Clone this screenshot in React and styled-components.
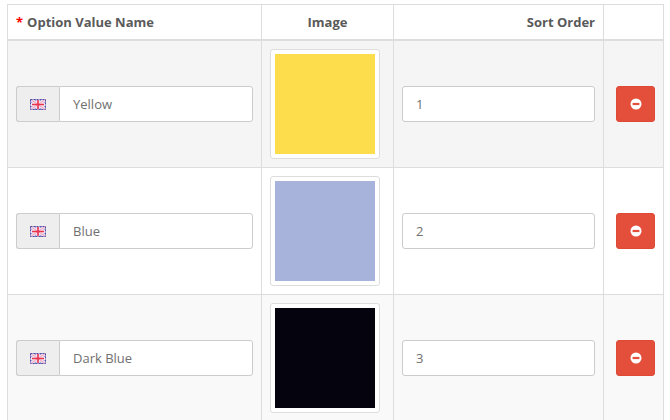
import React from 'react'
import styled, { createGlobalStyle } from 'styled-components'

const GlobalStyle = createGlobalStyle`
  html, body {
    margin: 0;
    padding: 0;
    background: #fff;
    overflow: hidden;
  }
  body {
    font-family: "Open Sans", "Liberation Sans", sans-serif;
    font-size: 13px;
    color: #666;
  }
`

const Page = styled.div`
  padding: 4px 0 0 7px;
`

const Table = styled.table`
  width: 656px;
  table-layout: fixed;
  border-collapse: collapse;
  border: 1px solid #ddd;
`

const HeadCell = styled.th`
  height: 34px;
  padding: 0 8px;
  border: 1px solid #ddd;
  border-bottom: 2px solid #ddd;
  font-size: 13px;
  font-weight: 700;
  color: #5a5a5a;
  text-align: ${p => p.$align || 'left'};
`

const Required = styled.span`
  color: #f00;
  margin-right: 4px;
`

const Row = styled.tr`
  background: ${p => p.$bg};
`

const Cell = styled.td`
  padding: 8px;
  border: 1px solid #ddd;
  vertical-align: middle;
  text-align: ${p => p.$align || 'left'};
`

const InputGroup = styled.div`
  display: flex;
  height: 36px;
`

const Addon = styled.span`
  width: 43px;
  flex: none;
  box-sizing: border-box;
  display: flex;
  align-items: center;
  justify-content: center;
  background: #eee;
  border: 1px solid #ccc;
  border-right: 0;
  border-radius: 3px 0 0 3px;
`

const TextInput = styled.input`
  flex: 1;
  min-width: 0;
  width: 100%;
  height: 36px;
  box-sizing: border-box;
  padding: 0 13px;
  background: #fff;
  border: 1px solid #ccc;
  border-radius: ${p => (p.$joined ? '0 3px 3px 0' : '3px')};
  font-family: inherit;
  font-size: 13px;
  color: #707070;
  outline: none;
`

const Thumbnail = styled.div`
  box-sizing: border-box;
  width: 110px;
  height: 110px;
  padding: 4px;
  background: #fff;
  border: 1px solid #ddd;
  border-radius: 3px;
`

const Swatch = styled.div`
  width: 100px;
  height: 100px;
  background: ${p => p.$color};
`

const RemoveButton = styled.button`
  width: 39px;
  height: 36px;
  padding: 0;
  display: inline-flex;
  align-items: center;
  justify-content: center;
  vertical-align: middle;
  background: #e34f3b;
  border: 1px solid #de4a36;
  border-radius: 3px;
`

const Flag = () => (
  <svg width="16" height="11" viewBox="0 0 16 11">
    <rect width="16" height="11" fill="#8f8fd0" />
    <path d="M0 0L16 11M16 0L0 11" stroke="#f0dfee" strokeWidth="3.2" />
    <path d="M8 0V11M0 5.5H16" stroke="#f3e6f0" strokeWidth="3.6" />
    <path d="M0 0L16 11M16 0L0 11" stroke="#f0a0b8" strokeWidth="1" />
    <path d="M8 1V10M2 5.5H14" stroke="#e8324e" strokeWidth="1.6" />
    <rect x="0.5" y="0.5" width="15" height="10" fill="none" stroke="#5050a8" strokeWidth="1" strokeDasharray="2 1" />
  </svg>
)

const MinusIcon = () => (
  <svg width="12" height="12" viewBox="0 0 12 12">
    <circle cx="6" cy="6" r="5.5" fill="#fff" />
    <rect x="2.6" y="4.9" width="6.8" height="2.2" fill="#e34f3b" />
  </svg>
)

const options = [
  { name: 'Yellow', color: '#fddd4b', sort: '1', bg: '#f5f5f5' },
  { name: 'Blue', color: '#a7b3db', sort: '2', bg: '#fff' },
  { name: 'Dark Blue', color: '#05030d', sort: '3', bg: '#f9f9f9' },
]

const App = () => (
  <Page>
    <GlobalStyle />
    <Table>
      <colgroup>
        <col style={{ width: 254 }} />
        <col style={{ width: 132 }} />
        <col style={{ width: 210 }} />
        <col style={{ width: 60 }} />
      </colgroup>
      <thead>
        <tr>
          <HeadCell><Required>*</Required>Option Value Name</HeadCell>
          <HeadCell $align="center">Image</HeadCell>
          <HeadCell $align="right">Sort Order</HeadCell>
          <HeadCell />
        </tr>
      </thead>
      <tbody>
        {options.map(option => (
          <Row key={option.name} $bg={option.bg}>
            <Cell>
              <InputGroup>
                <Addon><Flag /></Addon>
                <TextInput $joined defaultValue={option.name} />
              </InputGroup>
            </Cell>
            <Cell>
              <Thumbnail><Swatch $color={option.color} /></Thumbnail>
            </Cell>
            <Cell>
              <TextInput defaultValue={option.sort} />
            </Cell>
            <Cell $align="right">
              <RemoveButton type="button"><MinusIcon /></RemoveButton>
            </Cell>
          </Row>
        ))}
      </tbody>
    </Table>
  </Page>
)

export default App
